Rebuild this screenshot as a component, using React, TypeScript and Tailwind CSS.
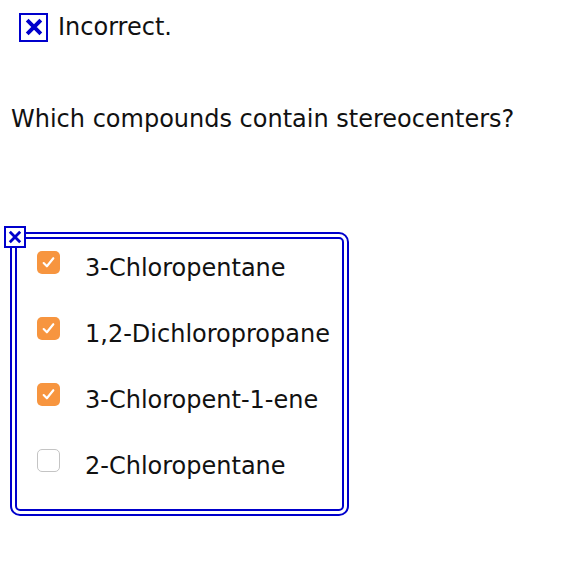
import React from "react";

const items = [
  { label: "3-Chloropentane", checked: true },
  { label: "1,2-Dichloropropane", checked: true },
  { label: "3-Chloropent-1-ene", checked: true },
  { label: "2-Chloropentane", checked: false },
];

function XMark({ size, stroke }: { size: number; stroke: number }) {
  return (
    <svg width={size} height={size} viewBox="0 0 10 10">
      <path d="M2 2 L8 8 M8 2 L2 8" stroke="#0000cc" strokeWidth={stroke} strokeLinecap="square" fill="none" />
    </svg>
  );
}

function Check({ checked }: { checked: boolean }) {
  if (!checked) {
    return <div className="w-[23px] h-[23px] rounded-[5px] border border-[#c4c4c4] bg-white shrink-0" />;
  }
  return (
    <div className="w-[23px] h-[23px] rounded-[5px] bg-[#f7953f] shrink-0 flex items-center justify-center">
      <svg width="15" height="15" viewBox="0 0 14 14">
        <path d="M2.5 7.5 L5.5 10.5 L11.5 3" stroke="white" strokeWidth="2" fill="none" strokeLinecap="round" strokeLinejoin="round" />
      </svg>
    </div>
  );
}

export default function App() {
  return (
    <div className="w-[578px] h-[562px] bg-white text-[#111] font-['DejaVu_Sans',Verdana,sans-serif]">
      <div className="pt-[12px] pl-[19px] flex items-center gap-[10px]">
        <div className="w-[29px] h-[29px] border-2 border-[#0000cc] bg-white flex items-center justify-center">
          <XMark size={18} stroke={2.2} />
        </div>
        <span className="text-[24px] leading-[30px]">Incorrect.</span>
      </div>
      <div className="pl-[11px] mt-[62px] text-[24px] leading-[30px]">Which compounds contain stereocenters?</div>
      <div className="relative ml-[10px] mt-[98px] w-[339px] border-[7px] border-double border-[#0000cc] rounded-[10px] pt-[7px] pb-[21px] pl-[20px] flex flex-col gap-[22px]">
        <div className="absolute left-[-13px] top-[-13px] w-[22px] h-[22px] border-2 border-[#0000cc] bg-white flex items-center justify-center">
          <XMark size={14} stroke={2} />
        </div>
        {items.map((it) => (
          <div key={it.label} className="h-[44px] flex items-center">
            <div className="-mt-[12px]">
              <Check checked={it.checked} />
            </div>
            <span className="ml-[25px] text-[24px] leading-[30px]">{it.label}</span>
          </div>
        ))}
      </div>
    </div>
  );
}
